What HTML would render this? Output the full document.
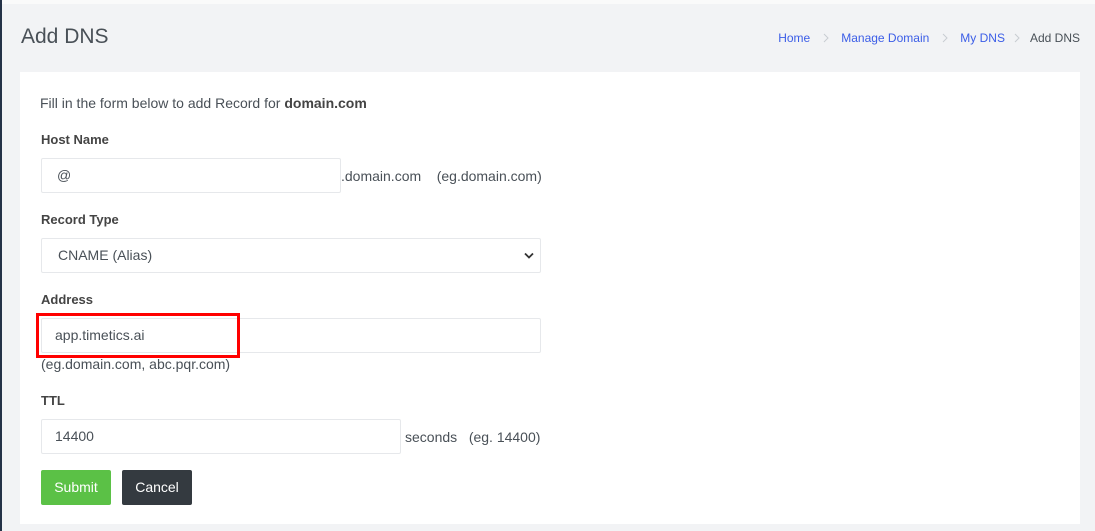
<!DOCTYPE html>
<html><head><style>
*{box-sizing:border-box;margin:0;padding:0}
body{width:1095px;height:531px;overflow:hidden;background:#f2f3f5;font-family:"Liberation Sans",sans-serif;color:#495057;position:relative}
.lb{position:absolute;left:0;top:0;width:2px;height:531px;background:#243247}
.tb{position:absolute;left:2px;top:0;right:0;height:4px;background:#fafafa}
h1{position:absolute;left:21px;top:25px;font-size:21px;font-weight:400;color:#495057}
.bc{position:absolute;right:15px;top:31px;font-size:12px;color:#495057;white-space:nowrap}
.bc a{color:#3b5de7;text-decoration:none}
.bc svg{margin:0 12px 0 13px;vertical-align:-1px}
.card{position:absolute;left:20px;top:72px;width:1060px;height:452px;background:#fff}
.t{position:absolute;font-size:14px}
.l{position:absolute;font-size:13px;font-weight:700;color:#444}
.in{position:absolute;border:1px solid #e6e8eb;border-radius:2px;background:#fff;font-size:14px;color:#495057;padding-left:15px;line-height:33px}
.btn{position:absolute;top:398px;height:35px;border-radius:2px;color:#fff;font-size:14px;text-align:center;line-height:35px}
</style></head><body>
<div class="lb"></div><div class="tb"></div>
<h1>Add DNS</h1>
<div class="bc"><a>Home</a><svg width="6" height="10" viewBox="0 0 6 10"><path d="M1 1l4 4-4 4" stroke="#c8ccd1" stroke-width="1" fill="none"/></svg><a>Manage Domain</a><svg width="6" height="10" viewBox="0 0 6 10"><path d="M1 1l4 4-4 4" stroke="#c8ccd1" stroke-width="1" fill="none"/></svg><a>My DNS</a><svg width="6" height="10" viewBox="0 0 6 10" style="margin:0 10px 0 9px"><path d="M1 1l4 4-4 4" stroke="#c8ccd1" stroke-width="1" fill="none"/></svg>Add DNS</div>
<div class="card">
<div class="t" style="left:20px;top:23px">Fill in the form below to add Record for <b style="color:#444">domain.com</b></div>
<div class="l" style="left:21px;top:60px">Host Name</div>
<div class="in" style="left:21px;top:86px;width:300px;height:35px">@</div>
<div class="t" style="left:321px;top:96px">.domain.com&nbsp;&nbsp;&nbsp;&nbsp;(eg.domain.com)</div>
<div class="l" style="left:21px;top:140px">Record Type</div>
<div class="in" style="left:21px;top:166px;width:500px;height:35px;padding-left:16px">CNAME (Alias)
<svg style="position:absolute;right:6px;top:13px" width="10" height="8" viewBox="0 0 10 8"><path d="M1 1.5l4 4 4-4" stroke="#333" stroke-width="1.8" fill="none"/></svg></div>
<div class="l" style="left:21px;top:220px">Address</div>
<div class="in" style="left:21px;top:246px;width:500px;height:35px;padding-left:13px">app.timetics.ai</div>
<div style="position:absolute;left:16px;top:241px;width:204px;height:45px;border:3px solid #f00"></div>
<div class="t" style="left:21px;top:284px">(eg.domain.com, abc.pqr.com)</div>
<div class="l" style="left:21px;top:321px">TTL</div>
<div class="in" style="left:21px;top:347px;width:360px;height:35px;padding-left:13px">14400</div>
<div class="t" style="left:385px;top:357px">seconds&nbsp;&nbsp;&nbsp;(eg. 14400)</div>
<div class="btn" style="left:21px;width:70px;background:#5bc146">Submit</div>
<div class="btn" style="left:102px;width:70px;background:#343a40">Cancel</div>
</div>
</body></html>
